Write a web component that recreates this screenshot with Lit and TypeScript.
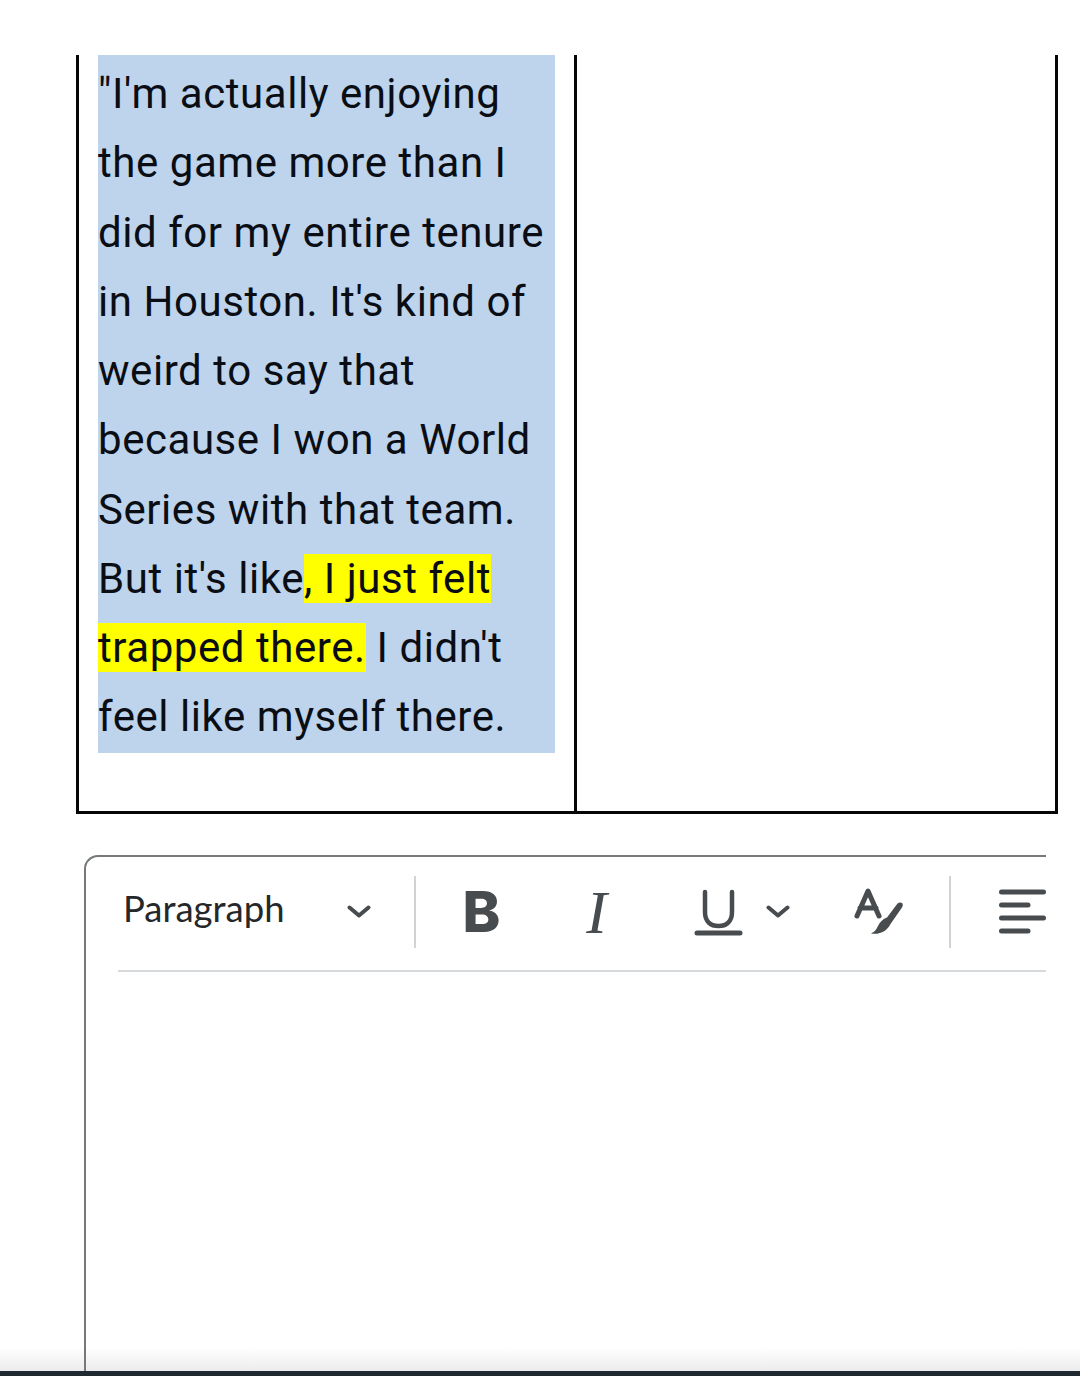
import { LitElement, html, css, svg } from "lit";
import { customElement } from "lit/decorators.js";

const chevron = svg`<path d="M2.5 2.5 L12 10.5 L21.5 2.5" fill="none" stroke="#494c4e" stroke-width="4" stroke-linecap="round" stroke-linejoin="round"/>`;

@customElement("app-root")
export class AppRoot extends LitElement {
  static styles = css`
    :host {
      display: flex;
      flex-direction: column;
      height: 1376px;
      overflow: hidden;
      padding-top: 55px;
      box-sizing: border-box;
      background: #fff linear-gradient(#ffffff, #ececec) no-repeat left bottom 5px / 100% 24px;
    }
    .table {
      display: grid;
      grid-template-columns: 495px 481px;
      width: 982px;
      box-sizing: border-box;
      margin-left: 76px;
      border: 3px solid #060606;
      border-top: 0;
      flex: none;
    }
    .cell {
      padding: 0 0 58px 19px;
    }
    .cell + .cell {
      border-left: 3px solid #060606;
    }
    .selection {
      width: 457px;
      height: 698px;
      box-sizing: border-box;
      padding-top: 4px;
      background: #bdd4ec;
      font: 400 42px/69.25px Roboto, sans-serif;
      letter-spacing: 0.55px;
      color: #0a0e14;
    }
    .mark {
      background: #ffff00;
    }
    .editor {
      flex: 1;
      margin: 41px 34px 0 84px;
      border: 2px solid #75797c;
      border-width: 2px 0 0 2px;
      border-top-left-radius: 14px;
    }
    .toolbar {
      display: flex;
      align-items: center;
      height: 113px;
      padding: 0 0 4px 37px;
      box-sizing: border-box;
    }
    .rule {
      height: 2px;
      margin-left: 32px;
      background: #d6dadc;
    }
    .format {
      display: flex;
      align-items: center;
      width: 291px;
      flex: none;
      font: 400 36.5px/1 Lato, sans-serif;
      color: #25282a;
    }
    .format-label {
      width: 224px;
      margin-top: -6px;
    }
    .chev {
      width: 24px;
      height: 13px;
      flex: none;
    }
    .format .chev {
      margin-top: -1px;
    }
    .divider {
      width: 2px;
      height: 72px;
      flex: none;
      background: #cfd3d5;
    }
    .glyph {
      text-align: center;
      flex: none;
      color: #494c4e;
      line-height: 1;
    }
    .bold {
      width: 131px;
      font: 800 57px/1 Inter, sans-serif;
    }
    .italic {
      width: 99px;
      font: italic 400 62px/1 "Liberation Serif", serif;
    }
    .under {
      margin-left: 46px;
      width: 54px;
      height: 52px;
      flex: none;
    }
    .under-chev {
      margin-left: 20px;
      margin-top: -1px;
    }
    .color {
      margin-left: 62px;
      width: 54px;
      height: 52px;
      flex: none;
    }
    .div2 {
      margin-left: 43px;
    }
    .align {
      margin-left: 48px;
      width: 47px;
      height: 46px;
      flex: none;
    }
    .footer {
      height: 5px;
      flex: none;
      background: #1f2a30;
    }
  `;

  render() {
    return html`
      <div class="table">
        <div class="cell">
          <div class="selection">
            "I'm actually enjoying<br />
            the game more than I<br />
            did for my entire tenure<br />
            in Houston. It's kind of<br />
            weird to say that<br />
            because I won a World<br />
            Series with that team.<br />
            But it's like<span class="mark">, I just felt<br />
            trapped there.</span> I didn't<br />
            feel like myself there.
          </div>
        </div>
        <div class="cell"></div>
      </div>
      <div class="editor">
        <div class="toolbar">
          <div class="format">
            <span class="format-label">Paragraph</span>
            <svg class="chev" viewBox="0 0 24 13">${chevron}</svg>
          </div>
          <div class="divider"></div>
          <div class="glyph bold">B</div>
          <div class="glyph italic">I</div>
          <svg class="under" viewBox="0 0 54 52" fill="none" stroke="#494c4e" stroke-linecap="round">
            <path d="M13 6 V26 C13 36 19 40 26.5 40 C34 40 40 36 40 26 V6" stroke-width="4.5" />
            <path d="M5 47 H48" stroke-width="5" />
          </svg>
          <svg class="chev under-chev" viewBox="0 0 24 13">${chevron}</svg>
          <svg class="color" viewBox="0 0 54 52">
            <path d="M5 30 L16 5 L27 30 M8 22 H24" fill="none" stroke="#494c4e" stroke-width="5" stroke-linecap="round" stroke-linejoin="round" />
            <path d="M45.5 17.5 Q48.5 15.5 50.5 17.5 Q51.5 19 50 21.5 L38.5 38 C35 45 28 49 19 47.5 C23 46 24.5 43 26 40 C28 35.5 31 33 35 31.5 Z" fill="#494c4e" />
          </svg>
          <div class="divider div2"></div>
          <svg class="align" viewBox="0 0 47 46" fill="none" stroke="#494c4e" stroke-width="5" stroke-linecap="round">
            <path d="M2.5 3 H44.5 M2.5 16 H29 M2.5 29 H44.5 M2.5 42 H29" />
          </svg>
        </div>
        <div class="rule"></div>
      </div>
      <div class="footer"></div>
    `;
  }
}
